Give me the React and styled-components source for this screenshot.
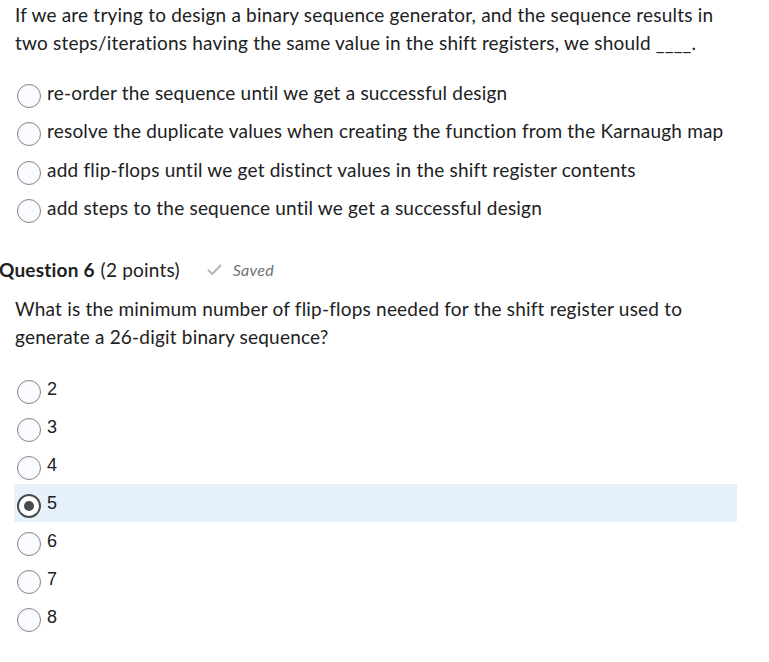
import styled, { createGlobalStyle } from "styled-components";

const GlobalStyle = createGlobalStyle`
  body {
    margin: 0;
    background: #ffffff;
    color: #202122;
    font-family: Lato, "Open Sans", sans-serif;
  }
`;

const Page = styled.div`
  padding: 1px 0 0 14px;
  width: 723px;
`;

const Prompt = styled.p`
  margin: 0 0 0 1px;
  font-size: 19px;
  line-height: 28px;
  letter-spacing: 0.2px;
`;

const ChoiceList = styled.div`
  display: flex;
  flex-direction: column;
  margin-top: ${(p) => p.$top}px;
`;

const Choice = styled.label`
  display: flex;
  align-items: center;
  gap: 6px;
  height: ${(p) => p.$h}px;
  padding-left: 3px;
  background: ${(p) => (p.$selected ? "#e6f1fc" : "transparent")};
  cursor: pointer;
`;

const Radio = styled.span`
  box-sizing: border-box;
  flex: none;
  width: 24px;
  height: 24px;
  margin-top: 6px;
  border-radius: 50%;
  border: ${(p) => (p.$checked ? "2px solid #494c4e" : "1.5px solid #808386")};
  background: ${(p) => (p.$checked ? "#ffffff" : "#f9fbff")};
  display: flex;
  align-items: center;
  justify-content: center;

  &::after {
    content: "";
    display: ${(p) => (p.$checked ? "block" : "none")};
    width: 10px;
    height: 10px;
    border-radius: 50%;
    background: #494c4e;
  }
`;

const ChoiceText = styled.span`
  font-size: ${(p) => (p.$digits ? 18 : 19)}px;
  line-height: 28px;
  letter-spacing: ${(p) => (p.$digits ? 0 : 0.2)}px;
  font-family: ${(p) => (p.$digits ? '"Liberation Sans", Arial, sans-serif' : "inherit")};
`;

const Heading = styled.div`
  display: flex;
  align-items: center;
  margin: 29px 0 0 -15px;
  font-size: 19px;
  line-height: 28px;
  letter-spacing: 0.2px;
`;

const Title = styled.span`
  font-weight: 700;
`;

const Points = styled.span`
  margin-left: 6px;
`;

const SavedTag = styled.span`
  display: flex;
  align-items: center;
  gap: 11px;
  margin-left: 27px;
  color: #6e7376;
  font-size: 16px;
  font-style: italic;
  letter-spacing: 0.3px;
`;

const letterOptions = [
  "re-order the sequence until we get a successful design",
  "resolve the duplicate values when creating the function from the Karnaugh map",
  "add flip-flops until we get distinct values in the shift register contents",
  "add steps to the sequence until we get a successful design",
];

const numberOptions = ["2", "3", "4", "5", "6", "7", "8"];

export default function App() {
  return (
    <>
      <GlobalStyle />
      <Page>
        <Prompt>
          If we are trying to design a binary sequence generator, and the sequence results in
          two steps/iterations having the same value in the shift registers, we should ____.
        </Prompt>
        <ChoiceList $top={17}>
          {letterOptions.map((text) => (
            <Choice key={text} $h={38.3}>
              <Radio />
              <ChoiceText>{text}</ChoiceText>
            </Choice>
          ))}
        </ChoiceList>

        <Heading>
          <Title>Question 6</Title>
          <Points>(2 points)</Points>
          <SavedTag>
            <svg width="15" height="12" viewBox="0 0 15 12">
              <path d="M1.5 6.3 L5.3 10 L13.5 1.5" fill="none" stroke="#b5b8ba" strokeWidth="2" strokeLinecap="round" strokeLinejoin="round" />
            </svg>
            Saved
          </SavedTag>
        </Heading>

        <Prompt style={{ marginTop: 11 }}>
          What is the minimum number of flip-flops needed for the shift register used to
          generate a 26-digit binary sequence?
        </Prompt>
        <ChoiceList $top={19}>
          {numberOptions.map((n) => (
            <Choice key={n} $h={38} $selected={n === "5"}>
              <Radio $checked={n === "5"} />
              <ChoiceText $digits>{n}</ChoiceText>
            </Choice>
          ))}
        </ChoiceList>
      </Page>
    </>
  );
}
